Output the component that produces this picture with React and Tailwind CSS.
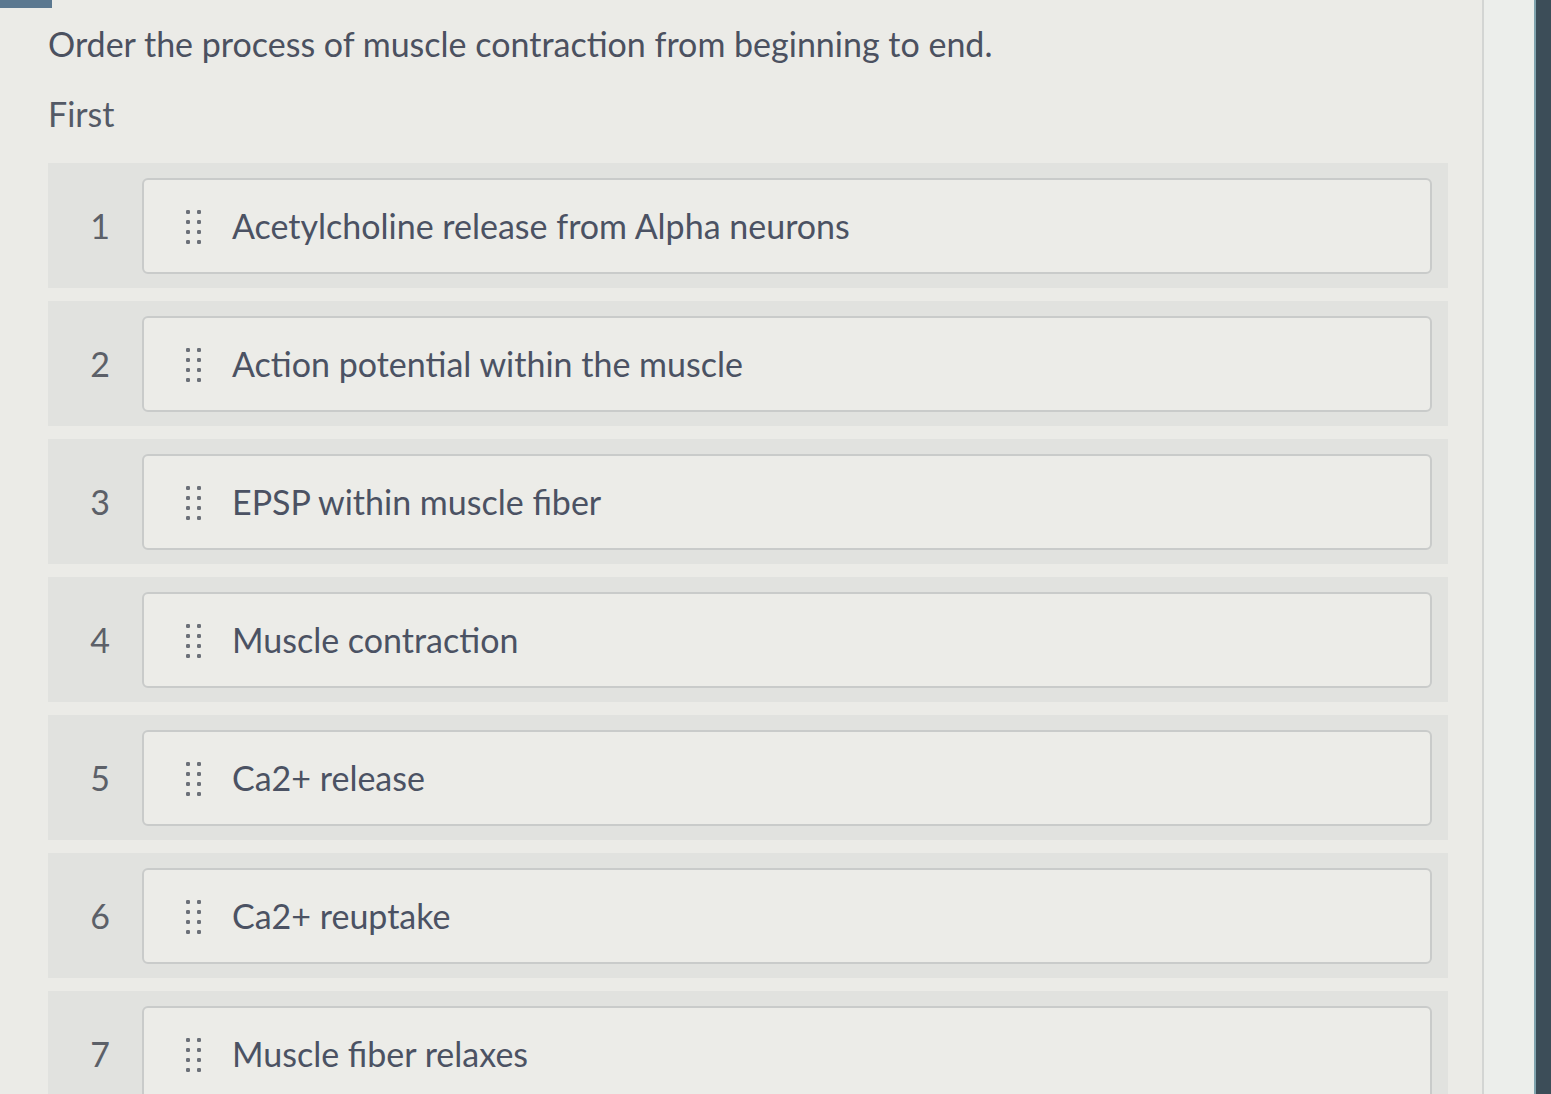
const steps = [
  "Acetylcholine release from Alpha neurons",
  "Action potential within the muscle",
  "EPSP within muscle fiber",
  "Muscle contraction",
  "Ca2+ release",
  "Ca2+ reuptake",
  "Muscle fiber relaxes",
];

const DragHandle = () => (
  <svg width="20" height="36" viewBox="0 0 20 36" className="shrink-0">
    {[0, 1, 2, 3].map((r) =>
      [0, 1].map((c) => (
        <rect
          key={`${r}-${c}`}
          x={2 + c * 11}
          y={2 + r * 10}
          width="4"
          height="4"
          rx="1.2"
          fill="#6b7078"
        />
      ))
    )}
  </svg>
);

const StepRow = ({ index, label }) => (
  <div className="flex items-center h-[125px] bg-[#e1e2df] pr-[16px]">
    <div className="w-[94px] shrink-0 pl-[10px] text-center text-[34px] text-[#5c6068]">{index}</div>
    <div className="flex-1 h-[96px] flex items-center rounded-[6px] border-2 border-[#c9cbca] bg-[#ecece8] pl-[40px]">
      <DragHandle />
      <span className="ml-[28px] text-[34px] text-[#4b5263]">{label}</span>
    </div>
  </div>
);

export default function App() {
  return (
    <div
      className="flex h-[1094px] w-full overflow-hidden bg-[#ebebe7]"
      style={{ fontFamily: "Lato, 'Open Sans', sans-serif" }}
    >
      <main className="relative w-[1484px] shrink-0 border-r-2 border-[#d3d5d3] pl-[48px] pr-[34px]">
        <div className="absolute left-0 top-0 h-[8px] w-[52px] bg-[#5b7890]" />
        <h1 className="pt-[20px] text-[34px] leading-[48px] text-[#4b5160]">
          Order the process of muscle contraction from beginning to end.
        </h1>
        <p className="mt-[22px] text-[34px] leading-[48px] text-[#545a66]">First</p>
        <ol className="mt-[25px] flex flex-col gap-[13px]">
          {steps.map((s, i) => (
            <li key={s}>
              <StepRow index={i + 1} label={s} />
            </li>
          ))}
        </ol>
      </main>
      <div className="w-[50px] shrink-0 bg-[#eceeeb]" />
      <div className="flex-1 bg-[#3c4d58] border-l-2 border-[#7fa3ad]" />
    </div>
  );
}
